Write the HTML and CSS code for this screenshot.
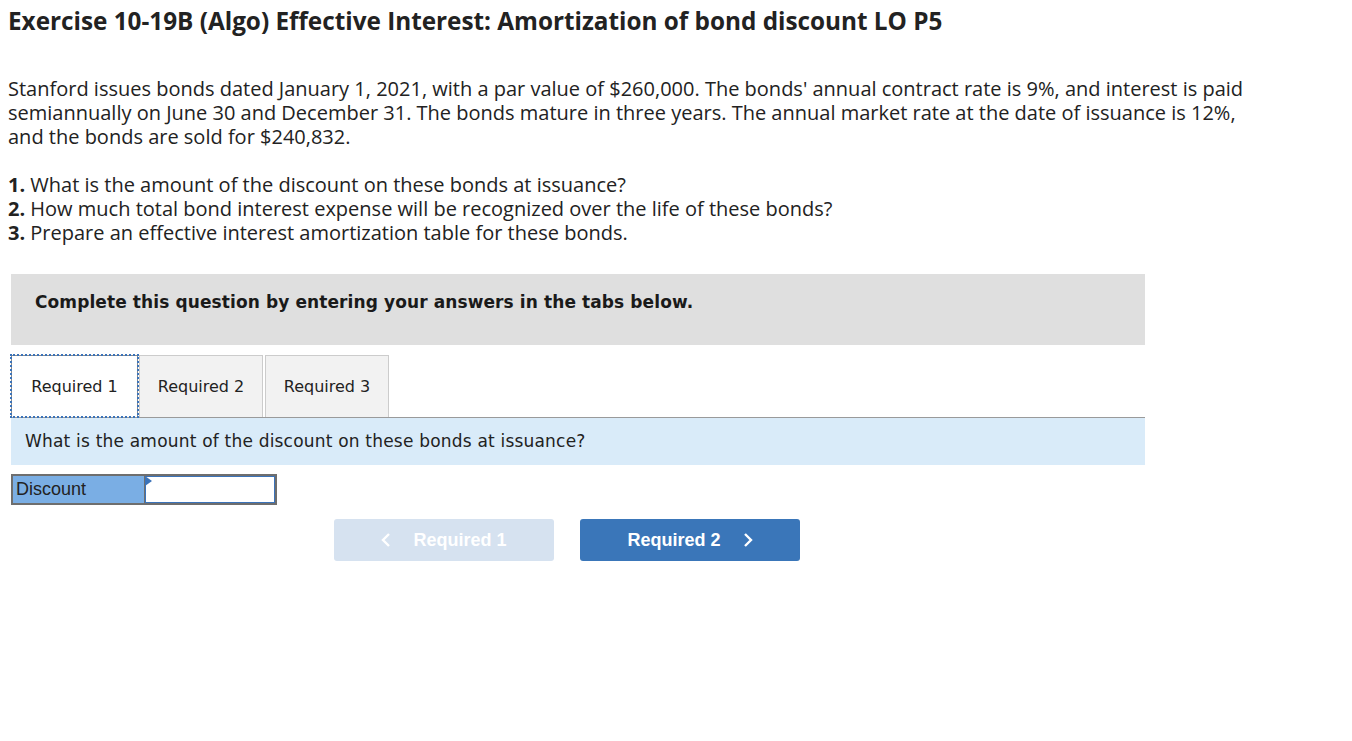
FILE: index.html
```html
<!DOCTYPE html>
<html lang="en">
<head>
    <meta charset="UTF-8">
    <title>Exercise 10-19B (Algo)</title>
    <link rel="stylesheet" href="styles.css">
</head>
<body>
    <h1 class="title">Exercise 10-19B (Algo) Effective Interest: Amortization of bond discount LO P5</h1>

    <p class="intro">Stanford issues bonds dated January 1, 2021, with a par value of $260,000. The bonds' annual contract rate is 9%, and interest is paid semiannually on June 30 and December 31. The bonds mature in three years. The annual market rate at the date of issuance is 12%, and the bonds are sold for $240,832.</p>

    <ol class="questions">
        <li><b>1.</b> What is the amount of the discount on these bonds at issuance?</li>
        <li><b>2.</b> How much total bond interest expense will be recognized over the life of these bonds?</li>
        <li><b>3.</b> Prepare an effective interest amortization table for these bonds.</li>
    </ol>

    <section class="answer">
        <div class="instructions">Complete this question by entering your answers in the tabs below.</div>

        <div class="tabs">
            <button class="tab active">Required 1</button>
            <button class="tab">Required 2</button>
            <button class="tab">Required 3</button>
        </div>

        <div class="prompt">What is the amount of the discount on these bonds at issuance?</div>

        <div class="entry">
            <div class="entry-label">Discount</div>
            <div class="entry-field"><input type="text"></div>
        </div>

        <div class="nav-buttons">
            <button class="nav prev" disabled>
                <svg class="chev" width="10" height="16" viewBox="0 0 10 16"><path d="M8 2 L2 8 L8 14" fill="none" stroke="currentColor" stroke-width="2.4"/></svg>
                Required 1
            </button>
            <button class="nav next">
                Required 2
                <svg class="chev" width="10" height="16" viewBox="0 0 10 16"><path d="M2 2 L8 8 L2 14" fill="none" stroke="currentColor" stroke-width="2.4"/></svg>
            </button>
        </div>
    </section>
</body>
</html>
```

FILE: styles.css
```css
body {
    margin: 0;
    padding: 0 8px;
    font-family: "Open Sans", Lato, Arial, sans-serif;
    color: #222;
    background-color: #fff;
}
.title {
    font-size: 24.3px;
    font-weight: 700;
    margin: 6px 0 0;
    line-height: 30px;
}
.intro {
    font-size: 20px;
    line-height: 24px;
    margin: 41px 0 24px;
    max-width: 1245px;
}
.questions {
    list-style: none;
    padding: 0;
    margin: 0;
    font-size: 20px;
    line-height: 24px;
}
.answer {
    margin: 29px 0 0 3px;
    width: 1134px;
}
.instructions {
    background-color: #dfdfdf;
    font-family: "DejaVu Sans", Verdana, sans-serif;
    font-weight: 700;
    font-size: 17px;
    letter-spacing: 0.1px;
    padding: 0 24px;
    height: 71px;
    line-height: 57px;
    color: #1a1a1a;
}
.tabs {
    display: flex;
    margin-top: 10px;
    border-bottom: 1px solid #9a9a9a;
}
.tab {
    font-family: "DejaVu Sans", Verdana, sans-serif;
    font-size: 16px;
    color: #222;
    background-color: #f2f2f2;
    border: 1px solid #ccc;
    border-bottom: none;
    height: 62px;
    width: 124px;
    padding: 0;
    margin-right: 2px;
}
.tab.active {
    background-color: #fff;
    border-color: #8a8a8a;
    outline: 2px dotted #3b73b9;
    outline-offset: -1px;
    width: 127px;
    margin-right: 1px;
}
.prompt {
    background-color: #d9ebf9;
    font-family: "DejaVu Sans", Verdana, sans-serif;
    font-size: 17px;
    letter-spacing: 0.2px;
    color: #222;
    height: 47px;
    line-height: 46px;
    padding: 0 14px;
}
.entry {
    display: flex;
    margin-top: 9px;
    height: 31px;
}
.entry-label {
    box-sizing: border-box;
    width: 134px;
    background-color: #7aaee4;
    border: 2px solid #6e6e6e;
    border-right: 1px solid #6e6e6e;
    font-family: "Liberation Sans", Arial, sans-serif;
    font-size: 18px;
    color: #222;
    line-height: 27px;
    padding-left: 3px;
}
.entry-field {
    position: relative;
    width: 132px;
    border: 2px solid #6e6e6e;
    border-left: none;
    box-sizing: border-box;
}
.entry-field input {
    box-sizing: border-box;
    width: 100%;
    height: 100%;
    border: 1px solid #3b73b9;
    margin: 0;
    outline: none;
}
.entry-field::before {
    content: "";
    position: absolute;
    left: 0;
    top: 0;
    border-left: 7px solid #3b73b9;
    border-top: 5px solid transparent;
    border-bottom: 5px solid transparent;
}
.nav-buttons {
    display: flex;
    gap: 26px;
    margin: 14px 0 0 323px;
}
.nav {
    display: flex;
    align-items: center;
    justify-content: center;
    gap: 22px;
    width: 220px;
    height: 42px;
    border: none;
    border-radius: 3px;
    color: #fff;
    font-family: "Liberation Sans", Arial, sans-serif;
    font-weight: 700;
    font-size: 18px;
}
.prev {
    background-color: #d6e2f0;
}
.next {
    background-color: #3a76b9;
}
```
